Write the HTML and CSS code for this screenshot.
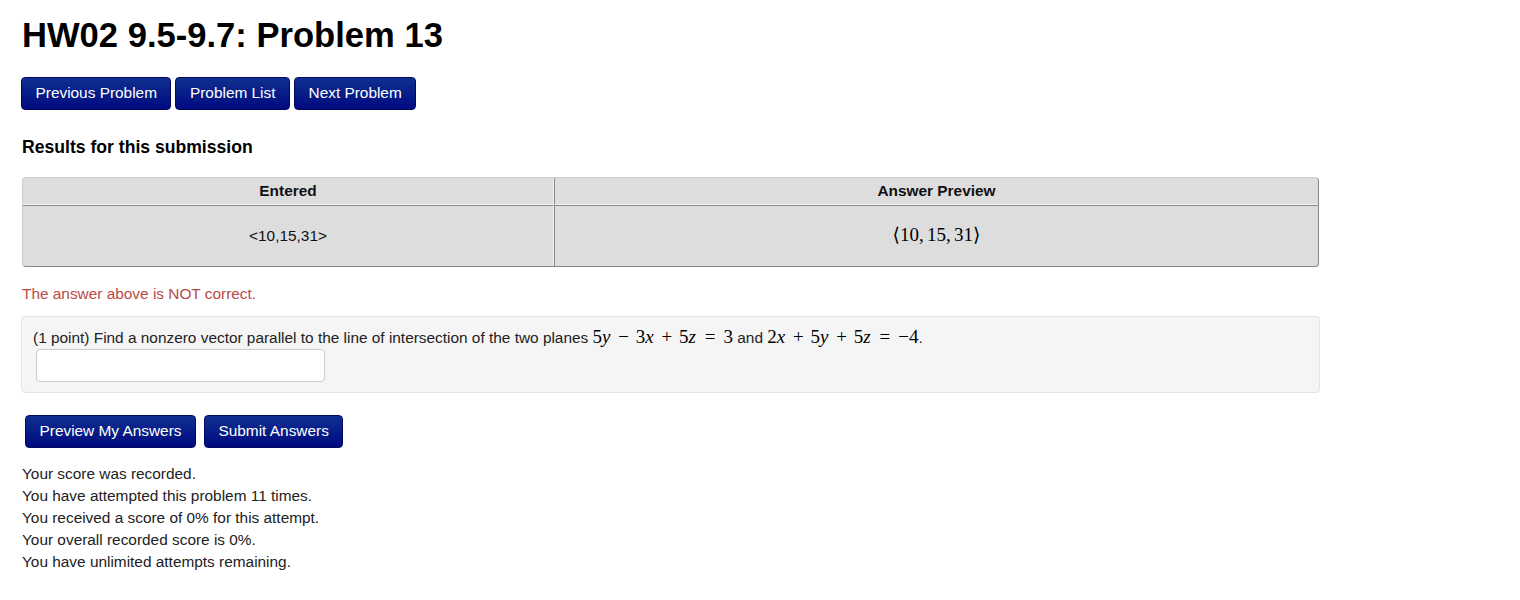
FILE: index.html
```html
<!DOCTYPE html>
<html lang="en">
<head>
  <meta charset="UTF-8" />
  <title>HW02 9.5-9.7: Problem 13</title>
  <link rel="stylesheet" href="styles.css">
</head>
<body>
  <div class="page">
    <h1>HW02 9.5-9.7: Problem 13</h1>

    <div class="nav">
      <button class="btn">Previous Problem</button>
      <button class="btn">Problem List</button>
      <button class="btn">Next Problem</button>
    </div>

    <h3>Results for this submission</h3>

    <table class="results">
      <colgroup>
        <col class="col-entered">
        <col>
      </colgroup>
      <thead>
        <tr><th>Entered</th><th>Answer Preview</th></tr>
      </thead>
      <tbody>
        <tr>
          <td>&lt;10,15,31&gt;</td>
          <td><span class="math">&#x27E8;10,<span class="thin"></span>15,<span class="thin"></span>31&#x27E9;</span></td>
        </tr>
      </tbody>
    </table>

    <div class="error">The answer above is NOT correct.</div>

    <div class="well">
      <div>(1 point) Find a nonzero vector parallel to the line of intersection of the two planes
        <span class="math">5<i>y</i><span class="op">&minus;</span>3<i>x</i><span class="op">+</span>5<i>z</i><span class="rel">=</span>3</span>
        and
        <span class="math">2<i>x</i><span class="op">+</span>5<i>y</i><span class="op">+</span>5<i>z</i><span class="rel">=</span>&minus;4</span>.
      </div>
      <input type="text" class="answer">
    </div>

    <div class="submit">
      <button class="btn">Preview My Answers</button>
      <button class="btn">Submit Answers</button>
    </div>

    <div class="score">
      Your score was recorded.<br>
      You have attempted this problem 11 times.<br>
      You received a score of 0% for this attempt.<br>
      Your overall recorded score is 0%.<br>
      You have unlimited attempts remaining.
    </div>
  </div>
</body>
</html>
```

FILE: styles.css
```css
body {
  margin: 0;
  font-family: "Liberation Sans", Arial, sans-serif;
  font-size: 15.4px;
  line-height: 22px;
  color: #222;
  background: #fff;
}
.page {
  padding: 0 22px;
}
h1 {
  margin: 15px 0 0;
  font-size: 34.6px;
  line-height: 40px;
  font-weight: bold;
  color: #000;
}
.nav {
  display: flex;
  gap: 4px;
  margin: 22px 0 0 -1px;
}
.btn {
  height: 33px;
  padding: 0 13.5px 1px;
  font-family: "Liberation Sans", Arial, sans-serif;
  font-size: 15.4px;
  color: #fff;
  background: linear-gradient(#0f3090, #000a80);
  border: 1px solid #00095e;
  border-radius: 4px;
  cursor: pointer;
}
h3 {
  margin: 26px 0 0;
  font-size: 17.6px;
  line-height: 22px;
  font-weight: bold;
  color: #000;
}
.results {
  width: 1297px;
  margin-top: 19px;
  table-layout: fixed;
  border-collapse: separate;
  border-spacing: 0;
  border: 1px solid #888;
  border-top-color: #ccc;
  border-left-color: #ccc;
  border-radius: 4px;
  background: #ddd;
  color: #111;
}
.col-entered {
  width: 531px;
}
.results th {
  height: 26px;
  padding: 0;
  font-weight: bold;
  text-align: center;
  border-bottom: 1px solid #f2f2f2;
}
.results td {
  height: 60px;
  padding: 0;
  text-align: center;
  border-top: 1px solid #888;
}
.results th:first-child,
.results td:first-child {
  border-right: 1px solid #f2f2f2;
}
.results th + th,
.results td + td {
  border-left: 1px solid #888;
}
.math {
  font-family: "Liberation Serif", "DejaVu Serif", serif;
  font-size: 19px;
  line-height: 1;
  color: #000;
}
.math i {
  padding-right: 0.05em;
}
.math .op {
  padding: 0 0.36em;
}
.math .rel {
  padding: 0 0.42em;
}
.thin {
  display: inline-block;
  width: 0.17em;
}
.error {
  margin-top: 16px;
  color: #b94a48;
}
.well {
  margin: 11px 0 0 -1px;
  width: 1275px;
  padding: 10px 11px;
  background: #f5f5f5;
  border: 1px solid #e3e3e3;
  border-radius: 4px;
}
.answer {
  display: block;
  box-sizing: border-box;
  width: 289px;
  height: 33px;
  margin-left: 3px;
  padding: 4px 6px;
  font-size: 15.4px;
  border: 1px solid #ccc;
  border-radius: 4px;
  background: #fff;
}
.submit {
  display: flex;
  gap: 8px;
  margin: 22px 0 0 3px;
}
.score {
  margin-top: 15px;
}
```
